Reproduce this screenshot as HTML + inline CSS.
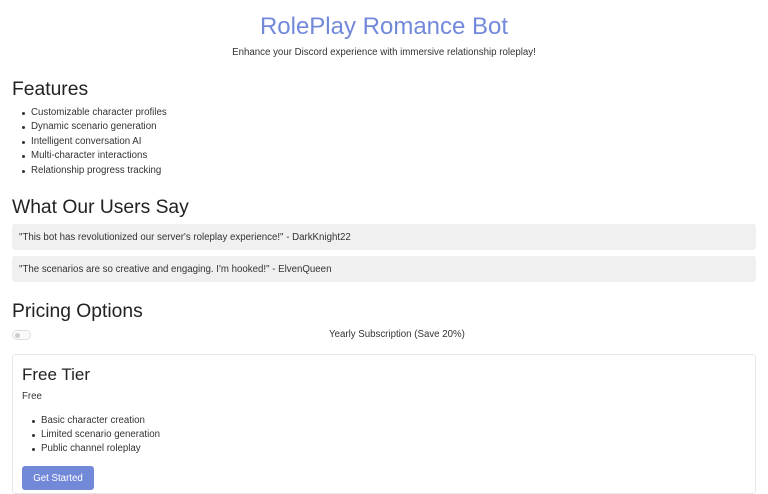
<!DOCTYPE html>
<html><head><style>
*{margin:0;padding:0;box-sizing:border-box}
body{width:768px;height:480px;overflow:hidden;background:#fff;font-family:"Liberation Sans",Arial,sans-serif;color:#333;position:relative}
.a{position:absolute;white-space:nowrap;line-height:1}
h1{position:absolute;left:0;width:768px;text-align:center;top:13px;font-size:24px;font-weight:normal;color:#7289da;line-height:28px}
h2{position:absolute;left:12px;font-size:19.3px;font-weight:normal;color:#222;line-height:24px}
.li{position:absolute;font-size:9.7px;line-height:12px;white-space:nowrap}
.li:before{content:"";position:absolute;left:-9px;top:5px;width:3px;height:3px;border-radius:50%;background:#333}
.t{position:absolute;left:12px;width:744px;height:26px;background:#f0f0f0;border-radius:3px;font-size:9.7px;line-height:26px;padding-left:7px}
</style></head><body>
<h1>RolePlay Romance Bot</h1>
<div class="a" style="left:0;width:768px;text-align:center;top:48px;font-size:9.7px">Enhance your Discord experience with immersive relationship roleplay!</div>
<h2 style="top:78px">Features</h2>
<div class="li" style="left:31px;top:107px">Customizable character profiles</div>
<div class="li" style="left:31px;top:121px">Dynamic scenario generation</div>
<div class="li" style="left:31px;top:136px">Intelligent conversation AI</div>
<div class="li" style="left:31px;top:150px">Multi-character interactions</div>
<div class="li" style="left:31px;top:165px">Relationship progress tracking</div>
<h2 style="top:196px">What Our Users Say</h2>
<div class="t" style="top:224px;line-height:27px">"This bot has revolutionized our server's roleplay experience!" - DarkKnight22</div>
<div class="t" style="top:256px;line-height:27px">"The scenarios are so creative and engaging. I'm hooked!" - ElvenQueen</div>
<h2 style="top:300px">Pricing Options</h2>
<div style="position:absolute;left:12px;top:330px;width:19px;height:10px;border:1px solid #ddd;border-radius:5px;background:#fafafa"><div style="position:absolute;left:2px;top:2px;width:5px;height:5px;border-radius:50%;background:#ccc"></div></div>
<div class="a" style="left:329px;top:330px;font-size:9.7px">Yearly Subscription (Save 20%)</div>
<div style="position:absolute;left:12px;top:354px;width:744px;height:140px;border:1px solid #e8e8e8;border-radius:3px"></div>
<div class="a" style="left:22px;top:366px;font-size:17px;color:#222">Free Tier</div>
<div class="a" style="left:22px;top:392px;font-size:9.7px">Free</div>
<div class="li" style="left:41px;top:415px">Basic character creation</div>
<div class="li" style="left:41px;top:429px">Limited scenario generation</div>
<div class="li" style="left:41px;top:443px">Public channel roleplay</div>
<div style="position:absolute;left:22px;top:466px;width:72px;height:24px;background:#7289da;border-radius:3px;color:#fff;font-size:9.7px;line-height:26px;text-align:center">Get Started</div>
</body></html>
